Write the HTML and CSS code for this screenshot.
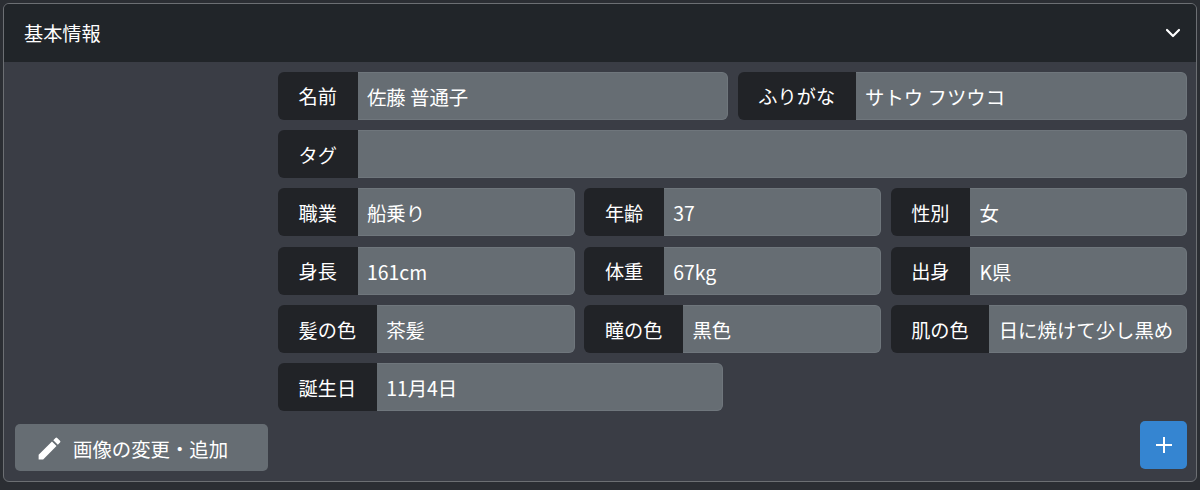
FILE: index.html
```html
<!DOCTYPE html>
<html lang="ja">
<head>
    <meta charset="UTF-8">
    <title>基本情報</title>
    <link rel="stylesheet" href="styles.css">
</head>
<body>
    <section class="card">
        <header class="card-header">
            <span>基本情報</span>
            <svg class="chevron" viewBox="0 0 16 16" width="16" height="16">
                <path d="M2 5l6 6 6-6" fill="none" stroke="#fff" stroke-width="2.2" stroke-linecap="round" stroke-linejoin="round"/>
            </svg>
        </header>
        <div class="card-body">
            <div class="fields">
                <div class="row row-2">
                    <div class="field"><label>名前</label><div class="value">佐藤 普通子</div></div>
                    <div class="field"><label>ふりがな</label><div class="value">サトウ フツウコ</div></div>
                </div>
                <div class="row">
                    <div class="field"><label>タグ</label><div class="value"></div></div>
                </div>
                <div class="row row-3">
                    <div class="field"><label>職業</label><div class="value">船乗り</div></div>
                    <div class="field"><label>年齢</label><div class="value">37</div></div>
                    <div class="field"><label>性別</label><div class="value">女</div></div>
                </div>
                <div class="row row-3">
                    <div class="field"><label>身長</label><div class="value">161cm</div></div>
                    <div class="field"><label>体重</label><div class="value">67kg</div></div>
                    <div class="field"><label>出身</label><div class="value">K県</div></div>
                </div>
                <div class="row row-3">
                    <div class="field"><label>髪の色</label><div class="value">茶髪</div></div>
                    <div class="field"><label>瞳の色</label><div class="value">黒色</div></div>
                    <div class="field"><label>肌の色</label><div class="value">日に焼けて少し黒め</div></div>
                </div>
                <div class="row">
                    <div class="field birthday"><label>誕生日</label><div class="value">11月4日</div></div>
                </div>
            </div>
            <div class="actions">
                <button class="button-image">
                    <svg viewBox="0 0 24 24" width="29" height="29">
                        <path fill="#fff" d="M3 17.25V21h3.75L17.81 9.94l-3.75-3.75L3 17.25zM20.71 7.04a1 1 0 0 0 0-1.41l-2.34-2.34a1 1 0 0 0-1.41 0l-1.83 1.83 3.75 3.75 1.83-1.83z"/>
                    </svg>
                    <span>画像の変更・追加</span>
                </button>
                <button class="button-add">
                    <svg viewBox="0 0 18 18" width="18" height="18">
                        <path d="M9 1v16M1 9h16" fill="none" stroke="#fff" stroke-width="2"/>
                    </svg>
                </button>
            </div>
        </div>
    </section>
</body>
</html>
```

FILE: styles.css
```css
* {
    box-sizing: border-box;
}

body {
    margin: 0;
    padding: 3px 3px 0;
    background: #2b2e33;
    font-family: "Noto Sans CJK JP", "Noto Sans", sans-serif;
    font-size: 19.2px;
    color: #fff;
}

.card {
    height: 479px;
    border: 1px solid #6c6f73;
    border-radius: 6px;
    background: #3a3d45;
    overflow: hidden;
}

.card-header {
    height: 57.8px;
    padding: 1px 15px 0 20px;
    display: flex;
    justify-content: space-between;
    align-items: center;
    background: #212529;
}

.card-body {
    padding: 10px 8.7px 10px 11px;
}

.fields {
    margin-left: 263px;
    display: flex;
    flex-direction: column;
    gap: 10.34px;
}

.row {
    display: grid;
    grid-template-columns: 1fr;
    gap: 9.6px;
}

.row-2 {
    grid-template-columns: 1fr 1fr;
    gap: 10.2px;
}

.row-3 {
    grid-template-columns: 1fr 1fr 1fr;
}

.field {
    height: 48px;
    display: flex;
}

.birthday {
    width: 445px;
}

.field label {
    padding: 1px 20.6px 0;
    display: flex;
    align-items: center;
    flex-shrink: 0;
    background: #212327;
    border-radius: 6px 0 0 6px;
    white-space: nowrap;
}

.value {
    flex: 1;
    min-width: 0;
    padding: 1px 9.4px 0;
    display: flex;
    align-items: center;
    background: #666d73;
    border: 1px solid #6f767c;
    border-left: none;
    border-radius: 0 6px 6px 0;
    font-size: 19.4px;
    white-space: nowrap;
    overflow: hidden;
}

.actions {
    margin-top: 9.7px;
    height: 50px;
    display: flex;
    justify-content: space-between;
}

.button-image {
    align-self: flex-end;
    width: 253px;
    height: 47px;
    padding: 1px 0 0 20px;
    display: flex;
    align-items: center;
    gap: 9px;
    background: #666d73;
    border: none;
    border-radius: 5px;
    color: #fff;
    font-family: inherit;
    font-size: 19.4px;
}

.button-add {
    width: 47px;
    height: 48px;
    padding: 0;
    display: flex;
    justify-content: center;
    align-items: center;
    background: #3585d1;
    border: none;
    border-radius: 5px;
}
```
